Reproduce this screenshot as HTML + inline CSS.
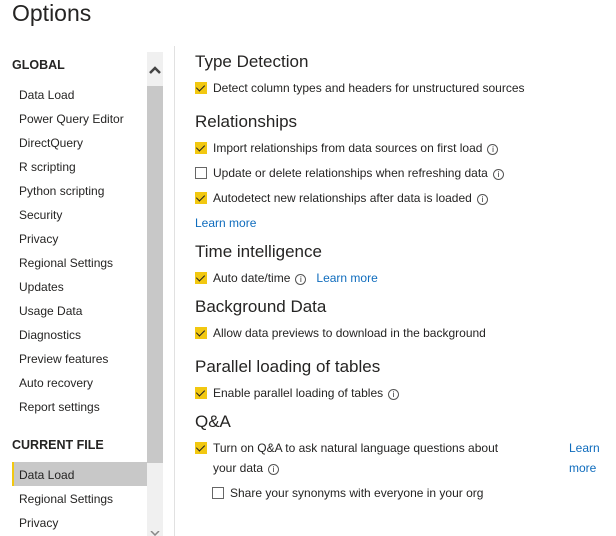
<!DOCTYPE html>
<html><head><style>
*{margin:0;padding:0;box-sizing:border-box}
body{width:616px;height:536px;overflow:hidden;background:#fff;font-family:"Liberation Sans",sans-serif;color:#252423;position:relative}
.a{position:absolute;white-space:nowrap}
.t{font-size:23px;left:12px;top:0px;color:#252423}
.g{font-size:12.5px;font-weight:bold;left:12px}
.n{font-size:12px;left:19px}
.h{font-size:17px;left:195px}
.r{font-size:12px;left:213px}
.cb{position:absolute;width:12px;height:12px;background:#f2c811}
.cb::after{content:"";position:absolute;left:3px;top:1px;width:4px;height:7px;border:solid #252423;border-width:0 1.5px 1.5px 0;transform:rotate(45deg)}
.ub{position:absolute;width:12px;height:12px;border:1.5px solid #666;background:#fff}
.i{display:inline-block;width:11px;height:11px;border:1px solid #555;border-radius:50%;font-size:8px;line-height:9px;text-align:center;margin-left:5px;vertical-align:0px}
.l{color:#0f6cbd}
</style></head><body>
<div class="a t">Options</div>
<div style="position:absolute;left:147px;top:52px;width:16px;height:484px;background:#f0f0f0"></div>
<div style="position:absolute;left:147px;top:86px;width:16px;height:377px;background:#c8c8c8"></div>
<svg style="position:absolute;left:149px;top:66px" width="12" height="10"><path d="M1 7 L6 2 L11 7" stroke="#444" stroke-width="2.5" fill="none"/></svg>
<svg style="position:absolute;left:150px;top:531px" width="10" height="5"><path d="M1 0 L5 4 L9 0" stroke="#888" stroke-width="1.5" fill="none"/></svg>
<div style="position:absolute;left:174px;top:46px;width:1px;height:490px;background:#e1e1e1"></div>
<div class="a g" style="top:58px">GLOBAL</div>
<div class="a n" style="top:88px">Data Load</div>
<div class="a n" style="top:112px">Power Query Editor</div>
<div class="a n" style="top:136px">DirectQuery</div>
<div class="a n" style="top:160px">R scripting</div>
<div class="a n" style="top:184px">Python scripting</div>
<div class="a n" style="top:208px">Security</div>
<div class="a n" style="top:232px">Privacy</div>
<div class="a n" style="top:256px">Regional Settings</div>
<div class="a n" style="top:280px">Updates</div>
<div class="a n" style="top:304px">Usage Data</div>
<div class="a n" style="top:328px">Diagnostics</div>
<div class="a n" style="top:352px">Preview features</div>
<div class="a n" style="top:376px">Auto recovery</div>
<div class="a n" style="top:400px">Report settings</div>
<div class="a g" style="top:438px">CURRENT FILE</div>
<div style="position:absolute;left:12px;top:462px;width:135px;height:24px;background:#c8c8c8;border-left:2px solid #f2c811"></div>
<div class="a n" style="top:468px">Data Load</div>
<div class="a n" style="top:492px">Regional Settings</div>
<div class="a n" style="top:516px">Privacy</div>

<div class="a h" style="top:52px">Type Detection</div>
<div class="cb" style="left:195px;top:82px"></div><div class="a r" style="top:81px">Detect column types and headers for unstructured sources</div>
<div class="a h" style="top:112px">Relationships</div>
<div class="cb" style="left:195px;top:142px"></div><div class="a r" style="top:141px">Import relationships from data sources on first load<span class="i">i</span></div>
<div class="ub" style="left:195px;top:167px"></div><div class="a r" style="top:166px">Update or delete relationships when refreshing data<span class="i">i</span></div>
<div class="cb" style="left:195px;top:192px"></div><div class="a r" style="top:191px">Autodetect new relationships after data is loaded<span class="i">i</span></div>
<div class="a r l" style="left:195px;top:216px">Learn more</div>
<div class="a h" style="top:242px">Time intelligence</div>
<div class="cb" style="left:195px;top:272px"></div><div class="a r" style="top:271px">Auto date/time<span class="i">i</span><span class="l" style="margin-left:10px">Learn more</span></div>
<div class="a h" style="top:297px">Background Data</div>
<div class="cb" style="left:195px;top:327px"></div><div class="a r" style="top:326px">Allow data previews to download in the background</div>
<div class="a h" style="top:357px">Parallel loading of tables</div>
<div class="cb" style="left:195px;top:387px"></div><div class="a r" style="top:386px">Enable parallel loading of tables<span class="i">i</span></div>
<div class="a h" style="top:412px">Q&amp;A</div>
<div class="cb" style="left:195px;top:442px"></div><div class="a r" style="top:441px">Turn on Q&amp;A to ask natural language questions about</div>
<div class="a r" style="top:461px">your data<span class="i">i</span></div>
<div class="a r l" style="left:569px;top:441px">Learn</div>
<div class="a r l" style="left:569px;top:461px">more</div>
<div class="ub" style="left:212px;top:487px"></div><div class="a r" style="left:230px;top:486px">Share your synonyms with everyone in your org</div>
</body></html>
